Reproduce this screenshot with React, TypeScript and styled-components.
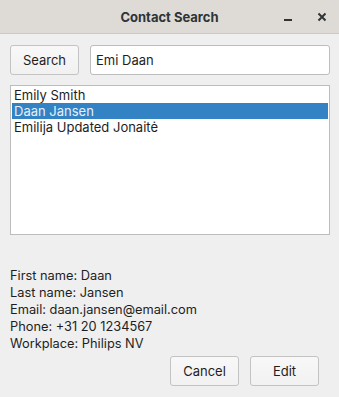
import { createGlobalStyle, styled } from "styled-components";

const GlobalStyle = createGlobalStyle`
  html, body {
    margin: 0;
    padding: 0;
    background: #efefef;
  }
  body {
    font-family: Inter, "Noto Sans", "Liberation Sans", sans-serif;
    font-size: 12.8px;
    color: #1e1e1e;
  }
`;

const Window = styled.div`
  width: 339px;
  height: 397px;
  display: flex;
  flex-direction: column;
  background: #efefef;
  overflow: hidden;
`;

const TitleBar = styled.div`
  position: relative;
  height: 34px;
  flex-shrink: 0;
  display: flex;
  align-items: center;
  justify-content: center;
  background: #dedbd7;
  border-bottom: 1px solid #cdc9c4;
  box-sizing: border-box;
`;

const Title = styled.div`
  font-weight: 700;
  font-size: 13px;
  color: #2e3436;
`;

const Controls = styled.div`
  position: absolute;
  right: 10px;
  top: 0;
  height: 100%;
  display: flex;
  align-items: center;
  gap: 20px;
`;

const Control = styled.div`
  width: 14px;
  height: 14px;
  display: flex;
  align-items: center;
  justify-content: center;
  color: #2e3436;
`;

const Body = styled.div`
  flex: 1;
  display: flex;
  flex-direction: column;
  padding: 11px 9px 0 10px;
`;

const SearchRow = styled.div`
  display: flex;
  gap: 11px;
  height: 30px;
`;

const Button = styled.button<{ $width: number }>`
  width: ${(p) => p.$width}px;
  height: 30px;
  box-sizing: border-box;
  border: 1px solid #c3c3c3;
  border-radius: 3px;
  background: linear-gradient(#f8f8f8, #f1f1f1);
  font-family: inherit;
  font-size: 13px;
  color: #1e1e1e;
  padding: 0;
`;

const Input = styled.div`
  flex: 1;
  height: 30px;
  box-sizing: border-box;
  border: 1px solid #bdbdbd;
  border-radius: 3px;
  background: #ffffff;
  display: flex;
  align-items: center;
  padding-left: 5px;
  font-size: 13px;
`;

const List = styled.div`
  margin-top: 10px;
  height: 150px;
  box-sizing: border-box;
  border: 1px solid #bcbcbc;
  background: #ffffff;
  padding: 1px;
`;

const Row = styled.div<{ $selected?: boolean }>`
  height: 16px;
  line-height: 16px;
  padding-left: 2px;
  font-size: 13px;
  background: ${(p) => (p.$selected ? "#3382c4" : "transparent")};
  color: ${(p) => (p.$selected ? "#e6f0fa" : "#1e1e1e")};
`;

const Details = styled.div`
  margin-top: 32px;
  display: flex;
  flex-direction: column;
`;

const Line = styled.div`
  height: 17px;
  line-height: 17px;
`;

const Footer = styled.div`
  margin-top: 4px;
  display: flex;
  justify-content: flex-end;
  gap: 11px;
  padding-right: 11px;
`;

const contacts = ["Emily Smith", "Daan Jansen", "Emilija Updated Jonaitė"];

const details = [
  "First name: Daan",
  "Last name: Jansen",
  "Email: daan.jansen@email.com",
  "Phone: +31 20 1234567",
  "Workplace: Philips NV",
];

export default function App() {
  return (
    <Window>
      <GlobalStyle />
      <TitleBar>
        <Title>Contact Search</Title>
        <Controls>
          <Control>
            <svg width="10" height="10" viewBox="0 0 10 10">
              <rect x="1" y="7" width="8" height="2" fill="currentColor" />
            </svg>
          </Control>
          <Control>
            <svg width="10" height="10" viewBox="0 0 10 10">
              <path
                d="M1.5 1.5 L8.5 8.5 M8.5 1.5 L1.5 8.5"
                stroke="currentColor"
                strokeWidth="2"
              />
            </svg>
          </Control>
        </Controls>
      </TitleBar>
      <Body>
        <SearchRow>
          <Button $width={69}>Search</Button>
          <Input>Emi Daan</Input>
        </SearchRow>
        <List>
          {contacts.map((c, i) => (
            <Row key={c} $selected={i === 1}>
              {c}
            </Row>
          ))}
        </List>
        <Details>
          {details.map((d) => (
            <Line key={d}>{d}</Line>
          ))}
        </Details>
        <Footer>
          <Button $width={69}>Cancel</Button>
          <Button $width={69}>Edit</Button>
        </Footer>
      </Body>
    </Window>
  );
}
